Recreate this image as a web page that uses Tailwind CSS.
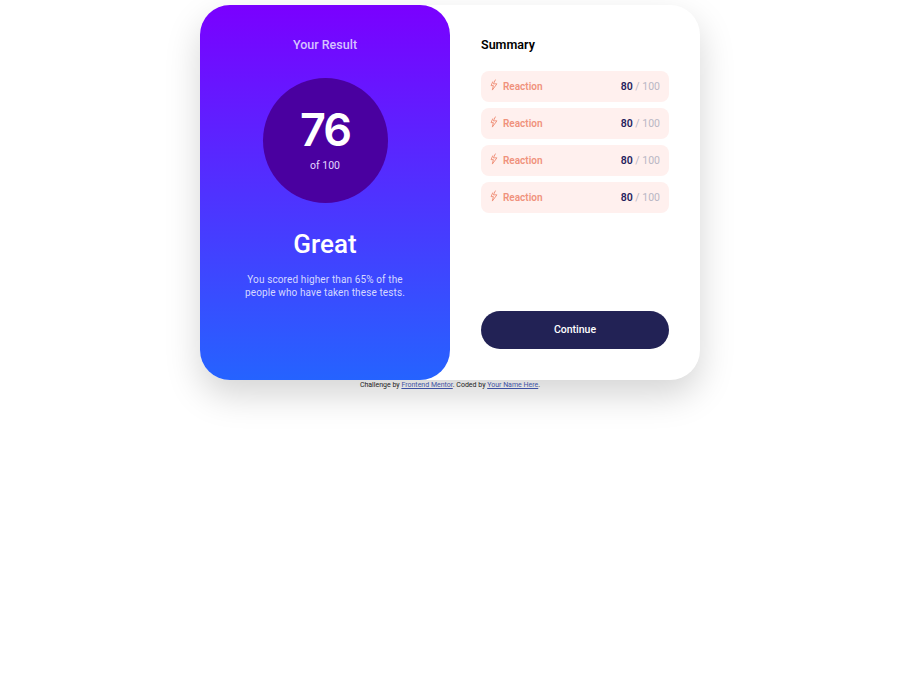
<!DOCTYPE html>
<html lang="en">
<head>
  <meta charset="UTF-8" />
  <title>Results summary</title>
  <script src="https://cdn.jsdelivr.net/npm/@tailwindcss/browser@4"></script>
</head>
<body class="min-h-screen bg-white font-['Roboto',sans-serif]">
  <div class="flex flex-col items-center pt-[5px]">
    <!-- Card -->
    <main class="flex w-[500px] h-[375px] rounded-[30px] bg-white shadow-[0_15px_35px_rgba(0,0,0,0.17)]">
      <!-- Result -->
      <section class="flex flex-col items-center w-[250px] h-full rounded-[30px] bg-[linear-gradient(to_bottom,#7a00ff,#2563ff)] pt-[31px]">
        <h2 class="text-[12.5px] leading-[17px] font-medium text-[#d6c2ff]">Your Result</h2>
        <div class="flex flex-col items-center w-[125px] h-[125px] mt-[25px] rounded-full bg-[#4a00a0] pt-[26px]">
          <p class="font-['Inter',sans-serif] text-[45px] leading-[52px] font-semibold tracking-[-2px] text-white">76</p>
          <p class="text-[10.5px] leading-[14px] mt-[3px] text-[#e3d6ff]">of 100</p>
        </div>
        <h1 class="text-[26px] leading-[30px] mt-[26px] font-medium text-white">Great</h1>
        <p class="w-[172px] text-center text-[10px] leading-[13px] mt-[14px] tracking-[0.12px] text-[#d5d8ff]">You scored higher than 65% of the people who have taken these tests.</p>
      </section>

      <!-- Summary -->
      <section class="flex flex-col w-[250px] h-full px-[31px] pt-[31px] pb-[31px]">
        <h2 class="text-[12.5px] leading-[17px] font-semibold text-black">Summary</h2>
        <ul class="flex flex-col gap-[6px] mt-[18px]">
          <li class="flex items-center justify-between h-[31px] rounded-[8px] bg-[#fff0ee] px-[9px] text-[10.5px]">
            <span class="flex items-center gap-[5px] text-[10px] font-semibold text-[#f0927c]">
              <svg class="w-[8px] h-[12px] mb-[3px]" viewBox="0 0 9 13" fill="none" stroke="#f0927c" stroke-width="1.1" stroke-linecap="round" stroke-linejoin="round"><path d="M6 .8 3.8 5.2H7.8L2.6 12.2 3.8 7.2H1.2L3 3"/></svg>
              Reaction
            </span>
            <span class="text-[#b9b7c4]"><b class="font-semibold text-[#25205c]">80</b> / 100</span>
          </li>
          <li class="flex items-center justify-between h-[31px] rounded-[8px] bg-[#fff0ee] px-[9px] text-[10.5px]">
            <span class="flex items-center gap-[5px] text-[10px] font-semibold text-[#f0927c]">
              <svg class="w-[8px] h-[12px] mb-[3px]" viewBox="0 0 9 13" fill="none" stroke="#f0927c" stroke-width="1.1" stroke-linecap="round" stroke-linejoin="round"><path d="M6 .8 3.8 5.2H7.8L2.6 12.2 3.8 7.2H1.2L3 3"/></svg>
              Reaction
            </span>
            <span class="text-[#b9b7c4]"><b class="font-semibold text-[#25205c]">80</b> / 100</span>
          </li>
          <li class="flex items-center justify-between h-[31px] rounded-[8px] bg-[#fff0ee] px-[9px] text-[10.5px]">
            <span class="flex items-center gap-[5px] text-[10px] font-semibold text-[#f0927c]">
              <svg class="w-[8px] h-[12px] mb-[3px]" viewBox="0 0 9 13" fill="none" stroke="#f0927c" stroke-width="1.1" stroke-linecap="round" stroke-linejoin="round"><path d="M6 .8 3.8 5.2H7.8L2.6 12.2 3.8 7.2H1.2L3 3"/></svg>
              Reaction
            </span>
            <span class="text-[#b9b7c4]"><b class="font-semibold text-[#25205c]">80</b> / 100</span>
          </li>
          <li class="flex items-center justify-between h-[31px] rounded-[8px] bg-[#fff0ee] px-[9px] text-[10.5px]">
            <span class="flex items-center gap-[5px] text-[10px] font-semibold text-[#f0927c]">
              <svg class="w-[8px] h-[12px] mb-[3px]" viewBox="0 0 9 13" fill="none" stroke="#f0927c" stroke-width="1.1" stroke-linecap="round" stroke-linejoin="round"><path d="M6 .8 3.8 5.2H7.8L2.6 12.2 3.8 7.2H1.2L3 3"/></svg>
              Reaction
            </span>
            <span class="text-[#b9b7c4]"><b class="font-semibold text-[#25205c]">80</b> / 100</span>
          </li>
        </ul>
        <button class="mt-auto h-[38px] rounded-full bg-[#222255] text-[10.5px] font-medium text-white">Continue</button>
      </section>
    </main>

    <!-- Attribution -->
    <footer class="mt-[1px] text-[7px] leading-[9px] text-[#222]">
      Challenge by <a href="#" class="underline text-[#3e52a3]">Frontend Mentor</a>. Coded by <a href="#" class="underline text-[#3e52a3]">Your Name Here</a>.
    </footer>
  </div>
</body>
</html>
